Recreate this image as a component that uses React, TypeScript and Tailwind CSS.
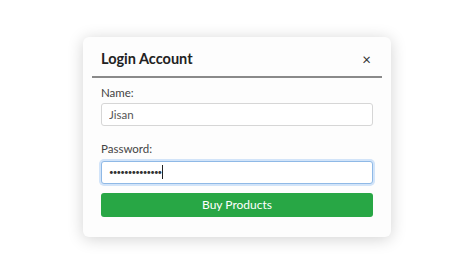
export default function App() {
  return (
    <div className="flex h-[275px] w-[474px] items-start justify-center bg-white pt-[37px]" style={{ fontFamily: 'Lato, "Open Sans", sans-serif' }}>
      <div className="flex h-[200px] w-[308px] flex-col rounded-md bg-[#fdfdfd] shadow-[0_2px_16px_rgba(0,0,0,0.18)]">
        <div className="mx-[9px] flex h-[41px] shrink-0 items-center justify-between border-b-2 border-[#8a8a8a] px-[9px] pt-[5px]">
          <h3 className="text-[14.5px] font-bold text-[#222]">Login Account</h3>
          <span className="pr-[2px] text-[15px] leading-none text-[#333]">×</span>
        </div>
        <div className="flex flex-col px-[18px] pt-[6px]">
          <label className="text-[11.5px] text-[#444]">Name:</label>
          <input
            readOnly
            value="Jisan"
            className="mt-[2px] h-[23px] rounded-[3px] border border-[#d6d6d6] bg-white px-[7px] text-[11.5px] text-[#555] outline-none"
          />
          <label className="mt-[14px] text-[11.5px] text-[#444]">Password:</label>
          <div className="mt-[3px] flex h-[23px] items-center rounded-[3px] border border-[#8fb9e6] bg-white px-[7px] shadow-[0_0_0_2px_rgba(128,180,240,0.35)]">
            <span className="text-[8px] tracking-[-0.9px] text-[#333]">••••••••••••••</span>
            <span className="ml-[1px] h-[14px] w-px bg-[#222]" />
          </div>
          <button className="mt-[9px] h-[24px] rounded-[3px] bg-[#28a745] text-[12px] text-white">Buy Products</button>
        </div>
      </div>
    </div>
  )
}
